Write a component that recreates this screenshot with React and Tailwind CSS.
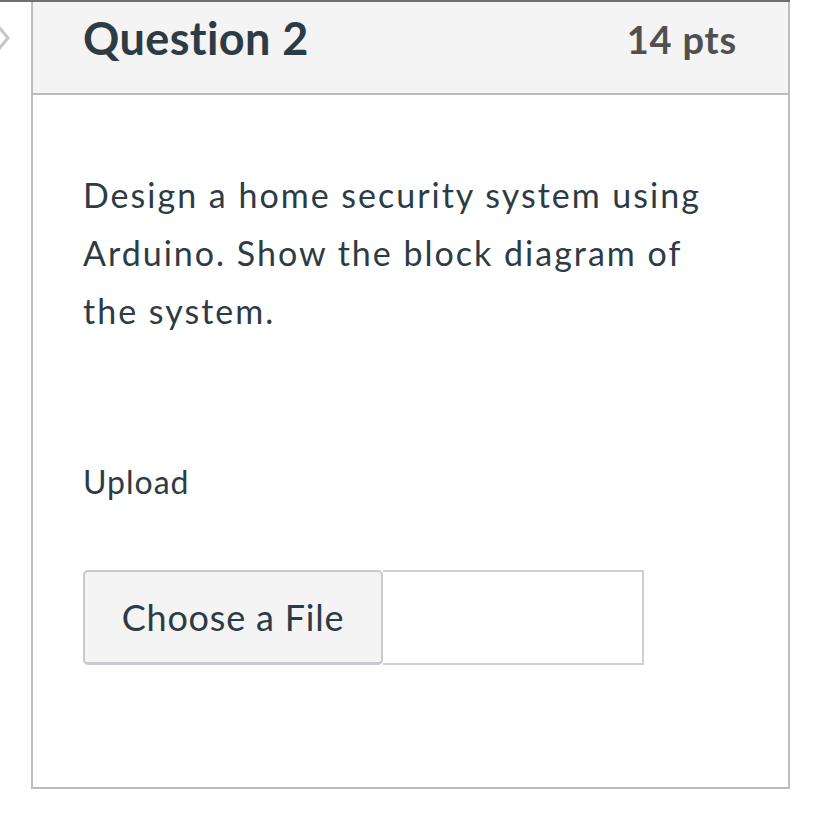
import React from "react";

export default function App() {
  return (
    <div className="min-h-[827px] w-[831px] bg-white" style={{ fontFamily: "Lato, 'Open Sans', sans-serif" }}>
      <div className="flex w-[790px] border-t-2 border-[#707070]">
        <div className="w-[31px] shrink-0 pt-[22px]">
          <svg width="12" height="28" viewBox="0 0 12 28">
            <path d="M-2 2 L8 14 L-2 26" fill="none" stroke="#c6c6c6" strokeWidth="3" />
          </svg>
        </div>
        <div className="flex h-[787px] w-[759px] flex-col border-x-2 border-b-2 border-[#bdbdbd]">
          <div className="flex h-[93px] items-center justify-between border-b-2 border-[#bcbcbc] bg-[#f4f4f4] pb-[18px] pl-[50px] pr-[51px]">
            <span className="text-[45px] font-bold leading-none tracking-[0.4px] text-[#2d3b45]">Question 2</span>
            <span className="text-[38px] font-bold leading-none tracking-[0.8px] text-[#505050]">14 pts</span>
          </div>
          <div className="flex flex-col pl-[50px]">
            <p className="mt-[71px] text-[34px] leading-[58px] tracking-[2px] text-[#2d3b45]">
              Design a home security system using
              <br />
              Arduino. Show the block diagram of
              <br />
              the system.
            </p>
            <div className="mt-[123px] text-[32px] leading-[38px] tracking-[1px] text-[#2d3b45]">Upload</div>
            <div className="mt-[69px] flex h-[95px] w-[561px]">
              <div className="flex h-full w-[300px] items-center justify-center rounded-[5px] border-2 border-b-[3px] border-[#c7cbcf] bg-[#f4f4f4] text-[36px] tracking-[0.8px] text-[#2d3b45]">
                Choose a File
              </div>
              <div className="h-full flex-1 border-y-2 border-r-2 border-[#d0d0d0] bg-white" />
            </div>
          </div>
        </div>
      </div>
    </div>
  );
}
